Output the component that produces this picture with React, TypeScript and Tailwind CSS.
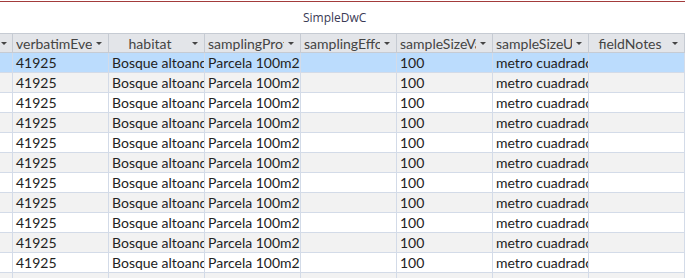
import React from 'react';

const columns = [
  { label: '', width: 'w-[13px]' },
  { label: 'verbatimEventDate', width: 'w-[96px]' },
  { label: 'habitat', width: 'w-[96px]' },
  { label: 'samplingProtocol', width: 'w-[96px]' },
  { label: 'samplingEffort', width: 'w-[96px]' },
  { label: 'sampleSizeValue', width: 'w-[96px]' },
  { label: 'sampleSizeUnit', width: 'w-[96px]' },
  { label: 'fieldNotes', width: 'w-[96px]' },
];

const row = ['', '41925', 'Bosque altoandino', 'Parcela 100m2', '', '100', 'metro cuadrado', ''];

function Arrow() {
  return (
    <svg width="6" height="3" viewBox="0 0 6 3" className="shrink-0">
      <path d="M0 0 H6 L3 3 Z" fill="#444" />
    </svg>
  );
}

function HeaderCell({ label, width, first }: { label: string; width: string; first: boolean }) {
  return (
    <div
      className={`${width} shrink-0 h-full flex items-center border-r border-[#c6cbd3] ${
        first ? 'justify-end pr-[5px]' : 'pl-[3px] pr-[6px]'
      }`}
    >
      {!first && (
        <span className="flex-1 min-w-0 overflow-hidden whitespace-nowrap text-center mr-[4px]">
          {label}
        </span>
      )}
      <Arrow />
    </div>
  );
}

function DataRow({ index }: { index: number }) {
  const bg = index === 0 ? 'bg-[#bbdcfd]' : index % 2 === 1 ? 'bg-[#f2f2f2]' : 'bg-white';
  return (
    <div className={`flex h-[20px] shrink-0 border-b border-[#d3dbe8] ${bg}`}>
      {columns.map((c, i) => (
        <div
          key={i}
          className={`${c.width} shrink-0 h-full border-r border-[#d3dbe8] pl-[3px] overflow-hidden whitespace-nowrap leading-[19px]`}
        >
          {row[i]}
        </div>
      ))}
    </div>
  );
}

export default function App() {
  const rows = Array.from({ length: 12 }, (_, i) => i);
  return (
    <div className="w-[685px] h-[278px] overflow-hidden bg-white flex flex-col text-[#222] font-['Lato','Liberation_Sans',sans-serif]">
      <div className="h-[1px] mt-[1px] bg-[#a33b3b] shrink-0" />
      <div className="h-[31px] shrink-0 flex items-center pl-[303px] text-[12px] text-[#3a3a55] font-['Open_Sans','Liberation_Sans',sans-serif]">
        SimpleDwC
      </div>
      <div className="h-[20px] shrink-0 flex bg-[#e3e5e9] border-t border-b border-[#c6cbd3] text-[14px] text-[#444]">
        {columns.map((c, i) => (
          <HeaderCell key={i} label={c.label} width={c.width} first={i === 0} />
        ))}
      </div>
      <div className="flex flex-col text-[14px]">
        {rows.map((i) => (
          <DataRow key={i} index={i} />
        ))}
      </div>
    </div>
  );
}
